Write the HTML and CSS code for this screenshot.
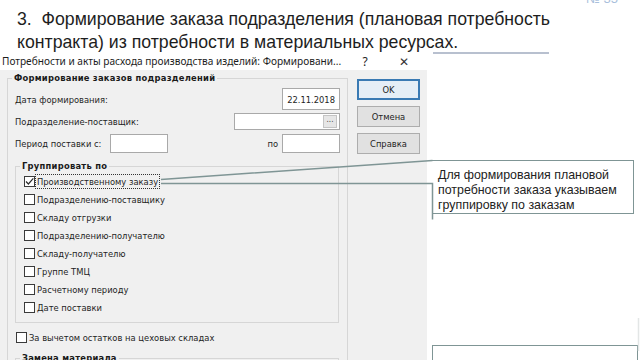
FILE: index.html
```html
<!DOCTYPE html>
<html lang="ru">
<head>
<meta charset="utf-8">
<link rel="stylesheet" href="styles.css">
</head>
<body>
<div class="slide">
  <span class="pageno">№ 35</span>
  <h1 class="heading">3.&nbsp; Формирование заказа подразделения (плановая потребность<br>контракта) из потребности в материальных ресурсах.</h1>
  <div class="content">
    <div class="dialog">
      <div class="titlebar">
        <span class="title-text">Потребности и акты расхода производства изделий: Формировани...</span>
        <span class="tb-help">?</span>
        <span class="tb-close">✕</span>
      </div>
      <div class="dbody">
        <div class="group outer">
          <div class="gtitle">Формирование заказов подразделений</div>
          <div class="row row-date">
            <span class="lbl">Дата формирования:</span>
            <span class="input date">22.11.2018</span>
          </div>
          <div class="row row-sup">
            <span class="lbl">Подразделение-поставщик:</span>
            <span class="input sup"><span class="dots">...</span></span>
          </div>
          <div class="row row-per">
            <span class="lbl per-lbl">Период поставки с:</span>
            <span class="input per1"></span>
            <span class="po">по</span>
            <span class="input per2"></span>
          </div>
          <div class="group inner">
            <div class="gtitle">Группировать по</div>
            <ul class="checks">
              <li class="chk"><span class="box"><svg viewBox="0 0 11 11" width="11" height="11"><path d="M2 5.5 L4.4 8 L9.3 2.4" fill="none" stroke="#2b2b2b" stroke-width="1.2"/></svg></span><span class="ctext focus">Производственному заказу</span></li>
              <li class="chk"><span class="box"></span><span class="ctext">Подразделению-поставщику</span></li>
              <li class="chk"><span class="box"></span><span class="ctext">Складу отгрузки</span></li>
              <li class="chk"><span class="box"></span><span class="ctext">Подразделению-получателю</span></li>
              <li class="chk"><span class="box"></span><span class="ctext">Складу-получателю</span></li>
              <li class="chk"><span class="box"></span><span class="ctext">Группе ТМЦ</span></li>
              <li class="chk"><span class="box"></span><span class="ctext">Расчетному периоду</span></li>
              <li class="chk"><span class="box"></span><span class="ctext">Дате поставки</span></li>
            </ul>
          </div>
          <div class="chk solo"><span class="box"></span><span class="ctext">За вычетом остатков на цеховых складах</span></div>
          <div class="group inner2">
            <div class="gtitle">Замена материала</div>
          </div>
        </div>
        <div class="buttons">
          <span class="btn ok">OK</span>
          <span class="btn">Отмена</span>
          <span class="btn">Справка</span>
        </div>
      </div>
    </div>
    <div class="notes">
      <div class="deco-line"></div>
      <div class="callout">Для формирования плановой<br>потребности заказа указываем<br>группировку по заказам</div>
      <div class="callout2"></div>
    </div>
  </div>
  <svg class="connector" width="640" height="360" viewBox="0 0 640 360">
    <path d="M161 179.5 L432.5 160.5 M161 183.5 L432.5 183.5 L432.5 219.5" fill="none" stroke="#7f9595" stroke-width="1.5"/>
    <path d="M638.5 318 L638.5 351" stroke="#e3e6e6" stroke-width="1.5"/>
  </svg>
</div>
</body>
</html>
```

FILE: styles.css
```css
* { box-sizing: border-box; }
html, body { margin: 0; padding: 0; background: #fff; }
.slide {
  position: relative;
  width: 640px;
  height: 360px;
  overflow: hidden;
  background: #fff;
  font-family: "DejaVu Sans Condensed", "DejaVu Sans", sans-serif;
}
.pageno {
  position: absolute;
  top: -9px;
  right: 22px;
  font: 13px "Liberation Sans", sans-serif;
  color: #a9bfdc;
}
.heading {
  margin: 0;
  height: 52px;
  padding: 8px 0 0 17px;
  font: normal 17.7px/23px "Liberation Sans", Arial, sans-serif;
  color: #1e1e1e;
}
.content {
  display: flex;
  height: 308px;
}
.dialog {
  width: 427px;
  height: 308px;
  background: #f0f0f0;
  display: flex;
  flex-direction: column;
  flex: none;
}
.titlebar {
  height: 18px;
  background: #fff;
  display: flex;
  align-items: center;
  padding-left: 2px;
  font: 10.1px "Noto Sans", sans-serif;
  color: #1c1c1c;
  flex: none;
}
.title-text { width: 358px; flex: none; white-space: nowrap; overflow: hidden; }
.tb-help { width: 10px; text-align: center; font-size: 12px; }
.tb-close { margin-left: 29px; font-size: 12px; color: #333; }
.dbody {
  display: flex;
  align-items: flex-start;
  gap: 9px;
  padding: 8px 0 0 7px;
  flex: 1;
  min-height: 0;
  font-size: 9.3px;
  color: #1e1e1e;
}
.group {
  border: 1px solid #d6d6d6;
}
.gtitle {
  width: max-content;
  margin: -7px 0 0 4px;
  padding: 0 2px;
  line-height: 12px;
  font-weight: bold;
  letter-spacing: 0.25px;
  background: #f0f0f0;
  color: #1a1a1a;
}
.outer {
  width: 341px;
  height: 300px;
  border-bottom: none;
  flex: none;
}
.row {
  display: flex;
  align-items: center;
  padding: 0 7px 0 7px;
}
.row-date { margin-top: 4px; height: 22px; }
.row-sup { margin-top: 3px; height: 17px; }
.row-per { margin-top: 4px; height: 19px; }
.input {
  display: flex;
  align-items: center;
  background: #fff;
  border: 1px solid #a9a9a9;
  height: 100%;
}
.date { margin-left: auto; width: 58px; justify-content: flex-end; padding-right: 4px; }
.sup { margin-left: auto; width: 106px; justify-content: flex-end; padding-right: 2px; }
.dots {
  width: 14px;
  height: 13px;
  background: #e6e6e6;
  border: 1px solid #c4c4c4;
  font-size: 8px;
  line-height: 8px;
  text-align: center;
  color: #444;
}
.per-lbl { width: 95px; }
.per1 { width: 58px; }
.po { margin-left: auto; margin-right: 4px; }
.per2 { width: 58px; }
.inner {
  margin: 13px 8px 0 7px;
}
.checks {
  list-style: none;
  margin: 0;
  padding: 0 0 6px 0;
}
.chk {
  display: flex;
  align-items: center;
  height: 18px;
  padding-left: 8px;
}
.box {
  width: 11px;
  height: 11px;
  border: 1px solid #3a3a3a;
  background: #fff;
  flex: none;
  display: flex;
}
.box svg { margin: -1px; }
.ctext { margin-left: 2px; white-space: nowrap; }
.focus { outline: 1px dotted #333; outline-offset: 1px; }
.solo { margin-top: 5px; padding-left: 8px; }
.inner2 {
  margin: 12px 8px 0 7px;
  border-bottom: none;
  height: 20px;
}
.buttons {
  display: flex;
  flex-direction: column;
  gap: 6px;
  width: 63px;
  padding-top: 1px;
  flex: none;
}
.btn {
  height: 21px;
  display: flex;
  align-items: center;
  justify-content: center;
  background: #e1e1e1;
  border: 1px solid #adadad;
  color: #1e1e1e;
}
.btn.ok {
  background: #e5eef6;
  border: 2px solid #3a7ab3;
}
.notes {
  flex: 1;
  display: flex;
  flex-direction: column;
}
.deco-line {
  width: 116px;
  height: 2px;
  margin-left: 6px;
  background: #b8c0cf;
}
.callout {
  width: 202px;
  height: 60px;
  margin: 106px 0 0 5px;
  border: 1.5px solid #7f9595;
  border-left: none;
  padding: 7px 0 0 6px;
  font: 12.4px/15px "Liberation Sans", Arial, sans-serif;
  color: #222;
  white-space: nowrap;
}
.callout2 {
  width: 206px;
  height: 20px;
  margin: 131px 0 0 5px;
  border: 1.5px solid #7f9595;
  border-bottom: none;
}
.connector {
  position: absolute;
  left: 0;
  top: 0;
  pointer-events: none;
}
```
